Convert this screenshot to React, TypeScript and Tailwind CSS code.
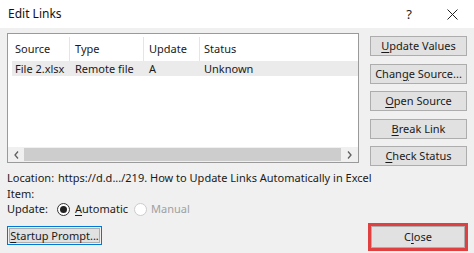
import React from "react";

const U = ({ children }: { children: React.ReactNode }) => <span className="underline underline-offset-2">{children}</span>;

function Btn({ children, className = "" }: { children: React.ReactNode; className?: string }) {
  return (
    <div className={`flex items-center justify-center bg-[#e1e1e1] border border-[#adadad] text-[#1a1a1a] ${className}`}>
      {children}
    </div>
  );
}

export default function App() {
  return (
    <div
      className="w-[474px] h-[253px] overflow-hidden bg-[#f0f0f0] text-[11px] leading-[16px] text-[#1a1a1a]"
      style={{ fontFamily: '"Noto Sans", "Open Sans", sans-serif' }}
    >
      {/* title bar */}
      <div className="h-[28px] bg-white flex items-center pl-[8px] pr-[16px]">
        <span className="text-[12px] text-[#111]">Edit Links</span>
        <span className="ml-auto mr-[35px] text-[13px] text-[#222]">?</span>
        <svg width="11" height="11" viewBox="0 0 11 11">
          <path d="M0.5 0.5 L10.5 10.5 M10.5 0.5 L0.5 10.5" stroke="#222" strokeWidth="1" />
        </svg>
      </div>

      <div className="pl-[7px] pr-[7px] pt-[5px]">
        <div className="flex">
          {/* list view */}
          <div className="w-[352px] h-[130px] border border-[#9a9a9a] bg-white flex flex-col">
            <div className="h-[27px] pt-[3px] flex items-stretch text-[#1a1a1a]">
              <div className="w-[62px] flex items-center pl-[7px] border-r border-[#e5e5e5]">Source</div>
              <div className="w-[74px] flex items-center pl-[5px] border-r border-[#e5e5e5]">Type</div>
              <div className="w-[56px] flex items-center pl-[5px] border-r border-[#e5e5e5]">Update</div>
              <div className="flex-1 flex items-center pl-[4px]">Status</div>
            </div>
            <div className="flex-1 pl-[4px]">
              <div className="h-[15px] bg-[#ebebeb] flex items-center">
                <div className="w-[58px] pl-[3px]">File 2.xlsx</div>
                <div className="w-[74px] pl-[5px]">Remote file</div>
                <div className="w-[56px] pl-[5px]">A</div>
                <div className="flex-1 pl-[4px]">Unknown</div>
              </div>
            </div>
            <div className="h-[15px] flex items-center bg-[#f0f0f0]">
              <div className="w-[16px] flex justify-center">
                <svg width="5" height="8" viewBox="0 0 5 8"><path d="M4 0.5 L1 4 L4 7.5" stroke="#606060" strokeWidth="1.3" fill="none" /></svg>
              </div>
              <div className="flex-1 h-[13px] bg-[#cdcdcd]"></div>
              <div className="w-[17px] flex justify-center">
                <svg width="5" height="8" viewBox="0 0 5 8"><path d="M1 0.5 L4 4 L1 7.5" stroke="#606060" strokeWidth="1.3" fill="none" /></svg>
              </div>
            </div>
          </div>

          {/* buttons */}
          <div className="ml-[11px] pt-[3px] flex flex-col gap-[7.5px]">
            <Btn className="w-[97px] h-[20px]"><span><U>U</U>pdate Values</span></Btn>
            <Btn className="w-[97px] h-[20px]"><span>Chan<U>g</U>e Source...</span></Btn>
            <Btn className="w-[97px] h-[20px]"><span><U>O</U>pen Source</span></Btn>
            <Btn className="w-[97px] h-[20px]"><span><U>B</U>reak Link</span></Btn>
            <Btn className="w-[97px] h-[20px]"><span><U>C</U>heck Status</span></Btn>
          </div>
        </div>

        {/* info */}
        <div className="mt-[4px] flex h-[16px] items-center">
          <div className="w-[51px]">Location:</div>
          <div>https://d.d.../219. How to Update Links Automatically in Excel</div>
        </div>
        <div className="flex h-[15px] items-center">
          <div className="w-[51px]">Item:</div>
        </div>
        <div className="flex items-center h-[16px]">
          <div className="w-[50px]">Update:</div>
          <div className="flex items-center">
            <span className="w-[13px] h-[13px] rounded-full border border-[#333] bg-white flex items-center justify-center">
              <span className="w-[7px] h-[7px] rounded-full bg-[#222]"></span>
            </span>
            <span className="ml-[5px]"><U>A</U>utomatic</span>
          </div>
          <div className="flex items-center ml-[6px] text-[#a0a0a0]">
            <span className="w-[13px] h-[13px] rounded-full border border-[#cccccc] bg-white"></span>
            <span className="ml-[4px]">Manual</span>
          </div>
        </div>

        <div className="flex items-start mt-[6px]">
          <div className="mt-[3px] w-[95px] h-[19px] border border-[#0078d7] p-[1px]">
            <div className="w-full h-full bg-[#e1e1e1] border border-[#adadad] flex items-center justify-center">
              <span><U>S</U>tartup Prompt...</span>
            </div>
          </div>
          <div className="ml-auto mr-[-1px] w-[100px] h-[28px] border-[3px] border-[#e0403f] bg-[#e8e8e8]">
            <div className="w-full h-full bg-[#e1e1e1] border border-[#adadad] flex items-center justify-center">
              <span>C<U>l</U>ose</span>
            </div>
          </div>
        </div>
      </div>
    </div>
  );
}
